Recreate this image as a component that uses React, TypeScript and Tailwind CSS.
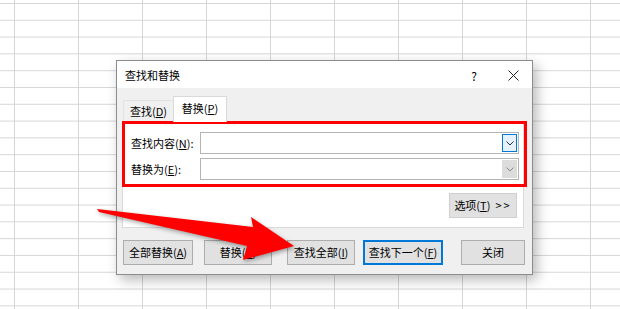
import React from 'react';

const font = "font-['Noto_Sans_CJK_SC','Microsoft_YaHei',sans-serif]";

function Chevron({ color }: { color: string }) {
  return (
    <svg width="8" height="5" viewBox="0 0 8 5">
      <path d="M0.5 0.5 L4 4 L7.5 0.5" fill="none" stroke={color} strokeWidth="1" />
    </svg>
  );
}

function Btn({
  children,
  className = '',
}: {
  children: React.ReactNode;
  className?: string;
}) {
  return (
    <div
      className={`flex h-[25px] items-center justify-center bg-[#e1e1e1] text-[11px] text-black ${className}`}
    >
      {children}
    </div>
  );
}

export default function App() {
  return (
    <div
      className={`relative h-[309px] w-[620px] overflow-hidden bg-white bg-[linear-gradient(to_right,#d6d6d6_1px,transparent_1px),linear-gradient(to_bottom,#d6d6d6_1px,transparent_1px)] bg-size-[64px_16.8px] bg-position-[14px_3px] ${font}`}
    >
      <div className="pl-[116px] pt-[60px]">
        {/* dialog */}
        <div className="flex h-[215px] w-[417px] flex-col border border-[#8c8c8c] bg-[#f0f0f0] shadow-[4px_5px_12px_rgba(0,0,0,0.28)]">
          <div className="flex h-[27px] items-center bg-white pl-[8px] pt-[2px] text-[11px] text-black">
            <span>查找和替换</span>
            <span className="ml-auto text-[12px] leading-none">?</span>
            <span className="ml-[30px] mr-[13px] flex w-[12px] items-center justify-center">
              <svg width="11" height="11" viewBox="0 0 11 11">
                <path d="M0.5 0.5 L10.5 10.5 M10.5 0.5 L0.5 10.5" stroke="#222" strokeWidth="1" />
              </svg>
            </span>
          </div>

          {/* tabs */}
          <div className="flex items-end pl-[6px] pt-[8px]">
            <div className="flex h-[21px] w-[50px] items-center justify-center border-l border-t border-[#e2e2e2] text-[11px] text-black">
              查找(<u>D</u>)
            </div>
            <div className="relative z-10 -mb-px flex h-[26px] w-[54px] items-center justify-center border border-b-0 border-[#d9d9d9] bg-white pb-[2px] text-[11px] text-black">
              替换(<u>P</u>)
            </div>
          </div>

          {/* panel */}
          <div className="ml-[5px] flex h-[107px] w-[402px] flex-col border border-[#dadada] bg-white pl-[8px] pt-[10px]">
            <div className="flex h-[22px] items-center">
              <span className="w-[69px] text-[11px] text-black">
                查找内容(<u>N</u>):
              </span>
              <div className="flex h-[22px] w-[319px] items-stretch border border-[#b4b4b4] bg-white">
                <div className="flex-1" />
                <div className="m-[1px] flex w-[15px] items-center justify-center border border-[#0078d7] bg-[#e5f1fb]">
                  <Chevron color="#333" />
                </div>
              </div>
            </div>
            <div className="mt-[4px] flex h-[22px] items-center">
              <span className="w-[69px] text-[11px] text-black">
                替换为(<u>E</u>):
              </span>
              <div className="flex h-[22px] w-[319px] items-stretch border border-[#b4b4b4] bg-white">
                <div className="flex-1" />
                <div className="m-[1px] flex w-[15px] items-center justify-center bg-[#dcdcdc]">
                  <Chevron color="#8a8a8a" />
                </div>
              </div>
            </div>
            <div className="mt-[13px] flex justify-end pr-[6px]">
              <Btn className="h-[24px] w-[68px] border border-[#d0d0d0]">
                选项(<u>T</u>)<span className="ml-[5px] tracking-[2px]">&gt;&gt;</span>
              </Btn>
            </div>
          </div>

          {/* buttons */}
          <div className="mt-[12px] flex pl-[6px]">
            <Btn className="w-[70px] border border-[#adadad]">
              全部替换(<u>A</u>)
            </Btn>
            <Btn className="ml-[11px] w-[68px] border border-[#adadad]">
              替换(<u>R</u>)
            </Btn>
            <Btn className="ml-[15px] w-[68px] border border-[#adadad]">
              查找全部(<u>I</u>)
            </Btn>
            <Btn className="ml-[8px] w-[80px] border-2 border-[#0078d7]">
              查找下一个(<u>F</u>)
            </Btn>
            <Btn className="ml-[18px] w-[64px] border border-[#adadad]">
              关闭
            </Btn>
          </div>
        </div>
      </div>

      {/* red annotation box */}
      <div className="absolute left-[122px] top-[121px] h-[66px] w-[405px] border-[3px] border-[#ff0000]" />

      {/* red arrow */}
      <svg
        className="absolute left-0 top-0 drop-shadow-[1px_2px_2px_rgba(0,0,0,0.35)]"
        width="620"
        height="309"
        viewBox="0 0 620 309"
      >
        <polygon
          points="97,209 253,227 251,217 294,246 243,260 247,246 99,212"
          fill="#ff0000"
        />
      </svg>
    </div>
  );
}
